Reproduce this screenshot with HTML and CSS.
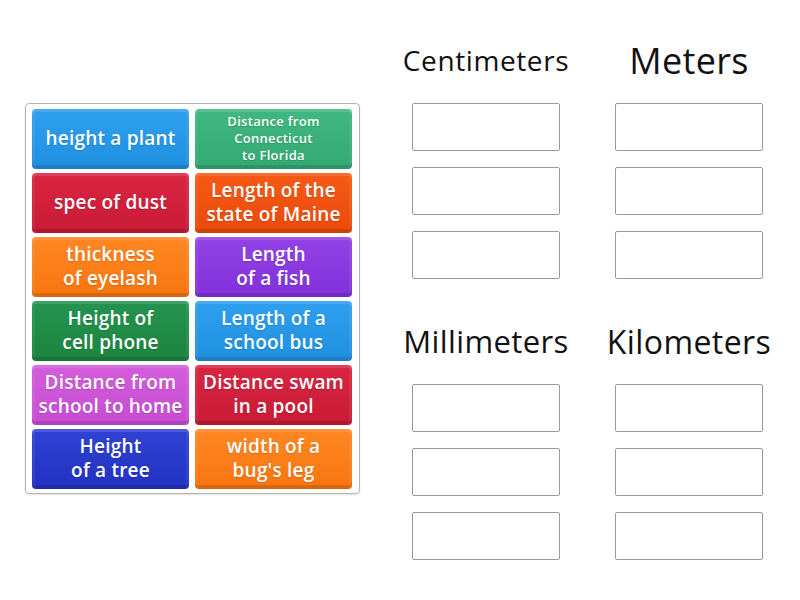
FILE: index.html
```html
<!DOCTYPE html>
<html lang="en">
<head>
<meta name="viewport" content="width=device-width, initial-scale=1">
<title>Group sort</title>
<link rel="stylesheet" href="styles.css">
</head>
<body>

<div class="page">
    <div class="tray">
        <div class="tile blue">height a plant</div>
        <div class="tile green small">Distance from<br>Connecticut<br>to Florida</div>
        <div class="tile red">spec of dust</div>
        <div class="tile vermilion">Length of the<br>state of Maine</div>
        <div class="tile orange">thickness<br>of eyelash</div>
        <div class="tile purple">Length<br>of a fish</div>
        <div class="tile darkgreen">Height of<br>cell phone</div>
        <div class="tile blue">Length of a<br>school bus</div>
        <div class="tile pink">Distance from<br>school to home</div>
        <div class="tile red">Distance swam<br>in a pool</div>
        <div class="tile navy">Height<br>of a tree</div>
        <div class="tile orange">width of a<br>bug's leg</div>
    </div>

    <div class="groups">
        <div class="group">
            <h2 class="title cm">Centimeters</h2>
            <div class="slot"></div>
            <div class="slot"></div>
            <div class="slot"></div>
        </div>
        <div class="group">
            <h2 class="title m">Meters</h2>
            <div class="slot"></div>
            <div class="slot"></div>
            <div class="slot"></div>
        </div>
        <div class="group">
            <h2 class="title mm">Millimeters</h2>
            <div class="slot"></div>
            <div class="slot"></div>
            <div class="slot"></div>
        </div>
        <div class="group">
            <h2 class="title km">Kilometers</h2>
            <div class="slot"></div>
            <div class="slot"></div>
            <div class="slot"></div>
        </div>
    </div>
</div>

</body>
</html>
```

FILE: styles.css
```css
* {
    box-sizing: border-box;
}

body {
    margin: 0;
    background: #fff;
    font-family: 'Open Sans', 'Lato', sans-serif;
    color: #111;
}

.page {
    display: flex;
    align-items: flex-start;
    gap: 52px;
    padding: 23px 0 0 25px;
}

/* left tray with the cards */
.tray {
    margin-top: 80px;
    display: grid;
    grid-template-columns: 157px 157px;
    grid-auto-rows: 60px;
    column-gap: 6px;
    row-gap: 4px;
    padding: 5px 7px 4px 6px;
    border: 1px solid #b3b3b3;
    border-radius: 4px;
    box-shadow: 0 1px 2px rgba(0, 0, 0, 0.12);
}

.tile {
    display: flex;
    align-items: center;
    justify-content: center;
    text-align: center;
    color: #fff;
    font-size: 19px;
    font-weight: 600;
    line-height: 24px;
    letter-spacing: 0.2px;
    white-space: nowrap;
    border-radius: 4px;
    text-shadow: 0 1px 1px rgba(0, 0, 0, 0.15);
    box-shadow: inset 0 -4px 0 rgba(0, 0, 0, 0.12),
                inset 0 3px 0 rgba(255, 255, 255, 0.12),
                inset 3px 0 0 rgba(255, 255, 255, 0.06),
                inset -3px 0 0 rgba(255, 255, 255, 0.06);
    padding-bottom: 2px;
}

.tile.small {
    font-size: 13px;
    line-height: 17px;
    letter-spacing: 0.3px;
}

.blue { background: linear-gradient(#2fa0ee, #1f8fe0); }
.green { background: linear-gradient(#41b781, #32a872); }
.red { background: linear-gradient(#da2542, #c81b36); }
.vermilion { background: linear-gradient(#f75a16, #ea4a0a); }
.orange { background: linear-gradient(#ff8722, #f77510); }
.purple { background: linear-gradient(#9342e6, #8230da); }
.darkgreen { background: linear-gradient(#249450, #1c843f); }
.pink { background: linear-gradient(#d45ddc, #c64bd2); }
.navy { background: linear-gradient(#3042d4, #2232c2); }

/* drop zones */
.groups {
    display: grid;
    grid-template-columns: 148px 148px;
    column-gap: 55px;
    row-gap: 25px;
}

.group {
    display: flex;
    flex-direction: column;
    gap: 16px;
}

.title {
    height: 64px;
    margin: 0;
    padding-top: 10px;
    display: flex;
    align-items: center;
    justify-content: center;
    font-weight: 400;
    white-space: nowrap;
    color: #111;
}

.title.cm { font-size: 28px; letter-spacing: 0.6px; }
.title.m { font-size: 36px; letter-spacing: 0.3px; }
.title.mm { font-size: 31px; letter-spacing: 0.4px; }
.title.km { font-size: 32px; letter-spacing: 0.4px; }

.slot {
    height: 48px;
    border: 1px solid #9a9a9a;
    border-radius: 2px;
    background: #fff;
}
```
